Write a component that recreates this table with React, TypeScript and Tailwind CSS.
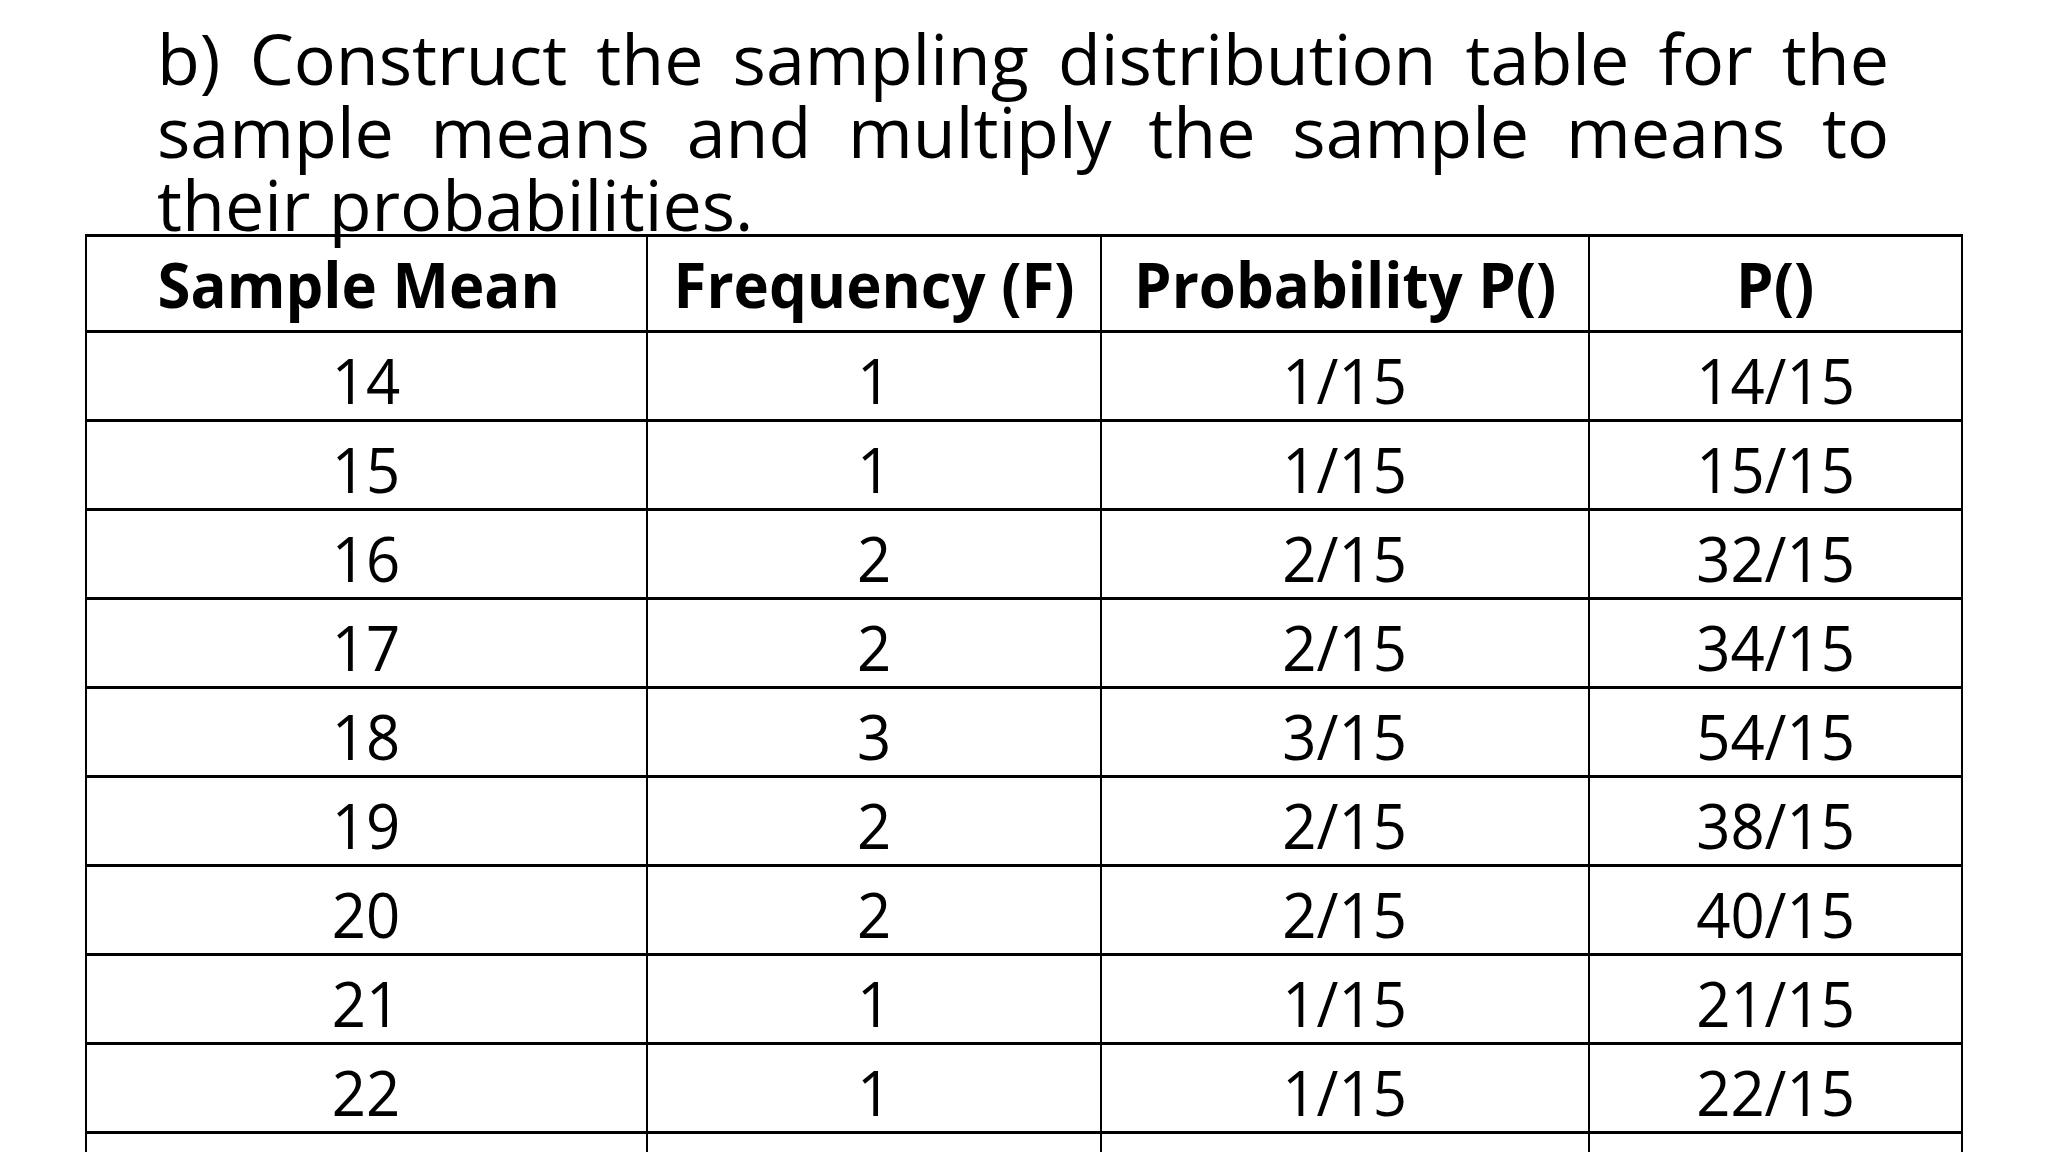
const rows = [
  { mean: '14', freq: '1', prob: '1/15', prod: '14/15' },
  { mean: '15', freq: '1', prob: '1/15', prod: '15/15' },
  { mean: '16', freq: '2', prob: '2/15', prod: '32/15' },
  { mean: '17', freq: '2', prob: '2/15', prod: '34/15' },
  { mean: '18', freq: '3', prob: '3/15', prod: '54/15' },
  { mean: '19', freq: '2', prob: '2/15', prod: '38/15' },
  { mean: '20', freq: '2', prob: '2/15', prod: '40/15' },
  { mean: '21', freq: '1', prob: '1/15', prod: '21/15' },
  { mean: '22', freq: '1', prob: '1/15', prod: '22/15' },
  { mean: 'Total', freq: '15', prob: '1', prod: '270/15' },
];

const cols = 'grid grid-cols-[561px_454px_488px_373px] border-b-[3px] border-black';

// glyphs in the source are a bit narrower than Open Sans, so squeeze them horizontally
const Cell = ({ children, head = false, className = '' }: { children: React.ReactNode; head?: boolean; className?: string }) => (
  <div className={`flex items-center justify-center border-r-2 border-black ${head ? 'pb-[18px]' : 'pb-[14px]'} ${className}`}>
    <span className="inline-block whitespace-nowrap scale-x-[0.95]">{children}</span>
  </div>
);

export default function App() {
  return (
    <div className="h-screen w-full overflow-hidden bg-white text-black font-['Open_Sans','Noto_Sans',sans-serif]">
      <div className="pl-[85px] pt-[22px]">
        {/* question text */}
        <div className="ml-[72px] w-[1732px] text-[70px] leading-[73px]">
          <p className="text-justify [text-align-last:justify]">
            b) Construct the sampling distribution table for the
          </p>
          <p className="text-justify [text-align-last:justify]">
            sample means and multiply the sample means to
          </p>
          <p>their probabilities.</p>
        </div>

        {/* table */}
        <div className="relative -mt-[7px] w-[1878px] border-l-2 border-t-[3px] border-black text-[63px]">
          <div className={`${cols} h-[96px] font-bold`}>
            <Cell head className="pr-[16px]">Sample Mean</Cell>
            <Cell head>Frequency (F)</Cell>
            <Cell head>Probability P()</Cell>
            <Cell head>P()</Cell>
          </div>
          {rows.map(r => (
            <div key={r.mean} className={`${cols} h-[89px]`}>
              <Cell>{r.mean}</Cell>
              <Cell>{r.freq}</Cell>
              <Cell>{r.prob}</Cell>
              <Cell>{r.prod}</Cell>
            </div>
          ))}
        </div>
      </div>
    </div>
  );
}
